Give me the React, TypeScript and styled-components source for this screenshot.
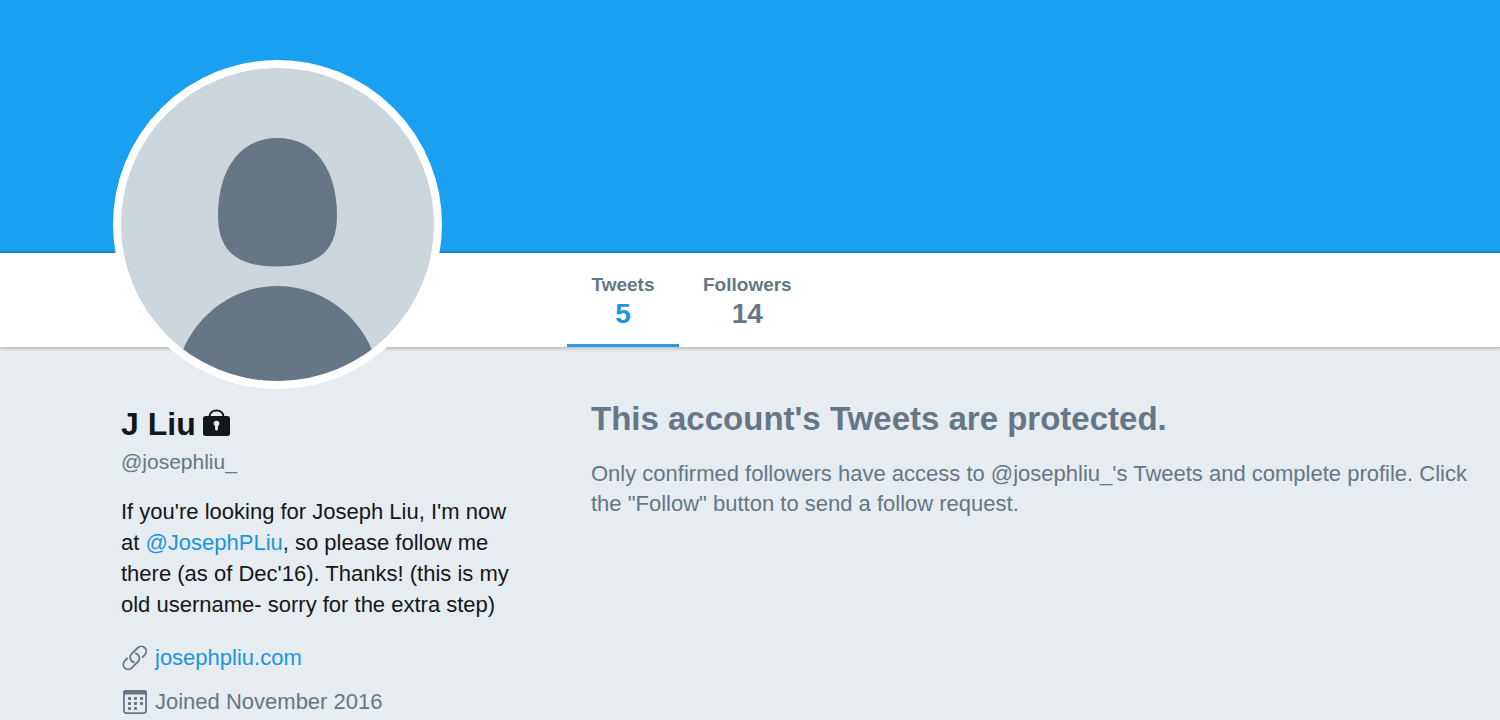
import React from "react";
import styled, { createGlobalStyle } from "styled-components";

const blue = "#1aa0f0";
const linkBlue = "#1b95e0";
const slate = "#657786";
const ink = "#14171a";

const GlobalStyle = createGlobalStyle`
  *, *::before, *::after { box-sizing: border-box; }
  body {
    margin: 0;
    background: #e6ecf0;
    color: ${ink};
    font-family: "Liberation Sans", Arial, sans-serif;
    font-size: 22px;
  }
  h1, h2, p { margin: 0; }
  a { color: ${linkBlue}; text-decoration: none; }
`;

const Page = styled.div`
  min-height: 100vh;
`;

const Header = styled.header`
  position: relative;
`;

const Banner = styled.div`
  height: 253px;
  background: ${blue};
  border-bottom: 2px solid #1888cc;
`;

const Avatar = styled.svg`
  position: absolute;
  left: 113px;
  bottom: -41px;
  width: 329px;
  height: 329px;
  border: 8px solid #fff;
  border-radius: 50%;
  background: #ccd6dd;
`;

const ProfileNav = styled.nav`
  display: flex;
  height: 95px;
  padding-left: 567px;
  background: #fff;
  border-bottom: 1px solid #bfc4c8;
  box-shadow: 0 1px 3px rgba(0, 0, 0, 0.2);
`;

const Tab = styled.a<{ $active?: boolean }>`
  display: flex;
  flex-direction: column;
  align-items: center;
  min-width: 112px;
  padding: 20px 24px 0;
  border-bottom: 3px solid ${(p) => (p.$active ? "#2b9bdc" : "transparent")};
  color: ${slate};
`;

const TabLabel = styled.span`
  font-size: 19px;
  line-height: 24px;
  font-weight: bold;
`;

const TabCount = styled.span<{ $active?: boolean }>`
  font-size: 28px;
  line-height: 34px;
  font-weight: bold;
  color: ${(p) => (p.$active ? linkBlue : slate)};
`;

const Content = styled.main`
  display: grid;
  grid-template-columns: 400px minmax(0, 1fr);
  column-gap: 70px;
  padding: 51px 24px 0 121px;
`;

const Profile = styled.aside`
  display: flex;
  flex-direction: column;
`;

const NameRow = styled.div`
  display: flex;
  align-items: center;
  gap: 7px;
  margin-top: 5px;
`;

const Name = styled.h1`
  font-size: 32px;
  line-height: 40px;
`;

const Handle = styled.a`
  margin-top: 4px;
  font-size: 21px;
  line-height: 28px;
  color: ${slate};
`;

const Bio = styled.p`
  margin-top: 20px;
  line-height: 31px;
`;

const Detail = styled.div<{ $gap: number }>`
  display: flex;
  align-items: center;
  gap: 8px;
  margin-top: ${(p) => p.$gap}px;
  line-height: 28px;
  color: ${slate};
`;

const Notice = styled.section`
  color: ${slate};
`;

const NoticeTitle = styled.h2`
  font-size: 33px;
  line-height: 40px;
`;

const NoticeText = styled.p`
  margin-top: 20px;
  line-height: 30px;
`;

const LockIcon = () => (
  <svg width="27" height="32" viewBox="0 0 27 32" role="img" aria-label="Protected">
    <path d="M6.500 9C6.500 5 9.500 2.500 13.500 2.500S20.500 5 20.500 9" fill="none" stroke={ink} strokeWidth="2" />
    <rect x="0" y="8" width="27" height="20" rx="2.500" fill={ink} />
    <circle cx="13.500" cy="15.500" r="2.800" fill="#e6ecf0" />
    <path d="M12.100 16h2.800v5.200a1.400 1.400 0 0 1-2.800 0z" fill="#e6ecf0" />
  </svg>
);

const LinkIcon = () => (
  <svg width="26" height="26" viewBox="0 0 26 26" fill="none" stroke={slate} strokeWidth="1.800" strokeLinecap="round" aria-hidden="true">
    <g transform="translate(13.800 12.800) rotate(-45)">
      <path d="M-3.830 2.500A5 5 0 0 1 0.500 -5H9.200A5 5 0 0 1 9.200 5H6" />
      <path d="M3.830 -2.500A5 5 0 0 1 -0.500 5H-9.200A5 5 0 0 1 -9.200 -5H-6" />
    </g>
  </svg>
);

const CalendarIcon = () => (
  <svg width="26" height="26" viewBox="0 0 26 26" aria-hidden="true">
    <rect x="2.900" y="1.900" width="22.200" height="22.200" rx="2.500" fill="none" stroke={slate} strokeWidth="1.800" />
    <path d="M2 5.500V3.500A2.500 2.500 0 0 1 4.500 1h19A2.500 2.500 0 0 1 26 3.500V5.500z" fill={slate} />
    <g fill={slate}>
      {[8, 13, 18].flatMap((y, row) =>
        [7, 13, 19]
          .slice(0, row === 2 ? 2 : 3)
          .map((x) => <rect key={`${x}-${y}`} x={x} y={y} width="3" height="3" rx="0.800" />)
      )}
    </g>
  </svg>
);

export default function App() {
  return (
    <Page>
      <GlobalStyle />
      <Header>
        <Banner />
        <ProfileNav aria-label="Profile">
          <Tab href="#tweets" $active aria-current="page">
            <TabLabel>Tweets</TabLabel>
            <TabCount $active>5</TabCount>
          </Tab>
          <Tab href="#followers">
            <TabLabel>Followers</TabLabel>
            <TabCount>14</TabCount>
          </Tab>
        </ProfileNav>
        <Avatar viewBox="0 0 313 313" role="img" aria-label="J Liu">
          <g fill={slate}>
            <path d="M156.500 70C194 70 216 101 216 148C216 184 196 198.500 156.500 198.500C117 198.500 97 184 97 148C97 101 119 70 156.500 70Z" />
            <path d="M62 282C78 244 115 218 156.500 218C198 218 235 244 251 282L251 313H62Z" />
          </g>
        </Avatar>
      </Header>
      <Content>
        <Profile>
          <NameRow>
            <Name>J Liu</Name>
            <LockIcon />
          </NameRow>
          <Handle href="#profile">@josephliu_</Handle>
          <Bio>
            If you're looking for Joseph Liu, I'm now at <a href="#josephpliu">@JosephPLiu</a>, so please follow me
            there (as of Dec'16). Thanks! (this is my old username- sorry for the extra step)
          </Bio>
          <Detail $gap={24}>
            <LinkIcon />
            <a href="#website">josephpliu.com</a>
          </Detail>
          <Detail $gap={16}>
            <CalendarIcon />
            <span>Joined November 2016</span>
          </Detail>
        </Profile>
        <Notice>
          <NoticeTitle>This account's Tweets are protected.</NoticeTitle>
          <NoticeText>
            Only confirmed followers have access to @josephliu_'s Tweets and complete profile. Click the "Follow" button
            to send a follow request.
          </NoticeText>
        </Notice>
      </Content>
    </Page>
  );
}
